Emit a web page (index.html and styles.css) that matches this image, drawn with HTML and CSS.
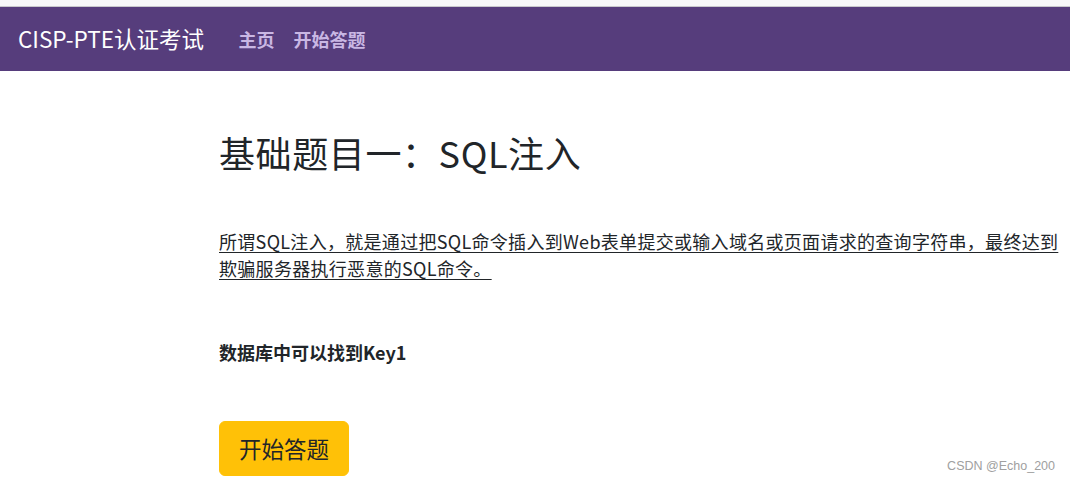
FILE: index.html
```html
<!DOCTYPE html>
<html lang="zh-CN">
<head>
<meta charset="utf-8">
<title>CISP-PTE认证考试</title>
<link rel="stylesheet" href="styles.css">
</head>
<body>
<div class="topstrip"></div>
<nav class="navbar">
  <a class="brand" href="#">CISP-PTE认证考试</a>
  <div class="nav-links">
    <a class="nav-link" href="#">主页</a>
    <a class="nav-link" href="#">开始答题</a>
  </div>
</nav>
<main class="content">
  <h1 class="title">基础题目一：SQL注入</h1>
  <p class="desc"><a href="#">所谓SQL注入，就是通过把SQL命令插入到Web表单提交或输入域名或页面请求的查询字符串，最终达到欺骗服务器执行恶意的SQL命令。 </a></p>
  <p class="hint">数据库中可以找到Key1</p>
  <a class="btn" href="#">开始答题</a>
</main>
<div class="watermark">CSDN @Echo_200</div>
</body>
</html>
```
FILE: styles.css
```css
html, body {
  margin: 0;
  padding: 0;
  background: #ffffff;
  font-family: "Noto Sans CJK SC", sans-serif;
  color: #212529;
}
body {
  width: 1070px;
  height: 482px;
  overflow: hidden;
  position: relative;
}
.topstrip {
  height: 6px;
  background: #f7f7f9;
  border-bottom: 1px solid #c8c8cc;
}
.navbar {
  height: 64px;
  background: #563d7c;
  display: flex;
  align-items: center;
  padding: 0 18px;
}
.brand {
  font-size: 22.5px;
  color: #ffffff;
  text-decoration: none;
  margin-right: 25px;
  line-height: 1;
  padding-bottom: 2px;
}
.nav-links {
  display: flex;
}
.nav-link {
  font-size: 18px;
  font-weight: 700;
  color: #c9b7e4;
  text-decoration: none;
  padding: 0 9.5px;
  line-height: 1;
}
.content {
  margin-left: 219px;
  width: 848px;
}
.title {
  font-size: 36px;
  font-weight: 400;
  letter-spacing: 0.6px;
  line-height: 43px;
  margin: 60px 0 0;
}
.desc {
  font-size: 18px;
  letter-spacing: 0.3px;
  line-height: 27px;
  margin: 54px 0 0;
}
.desc a {
  color: #212529;
  text-decoration: underline;
  text-underline-offset: 3px;
}
.hint {
  font-size: 18px;
  font-weight: 700;
  line-height: 27px;
  margin: 57px 0 0;
}
.btn {
  display: inline-block;
  margin-top: 55px;
  font-size: 22.5px;
  line-height: 35px;
  padding: 9px 19px;
  border: 1px solid #ffc107;
  border-radius: 6px;
  background: #ffc107;
  color: #212529;
  text-decoration: none;
}
.watermark {
  position: absolute;
  right: 15px;
  bottom: 9px;
  font-family: "Liberation Sans", sans-serif;
  font-size: 12.5px;
  color: #a0a0a0;
}
```
